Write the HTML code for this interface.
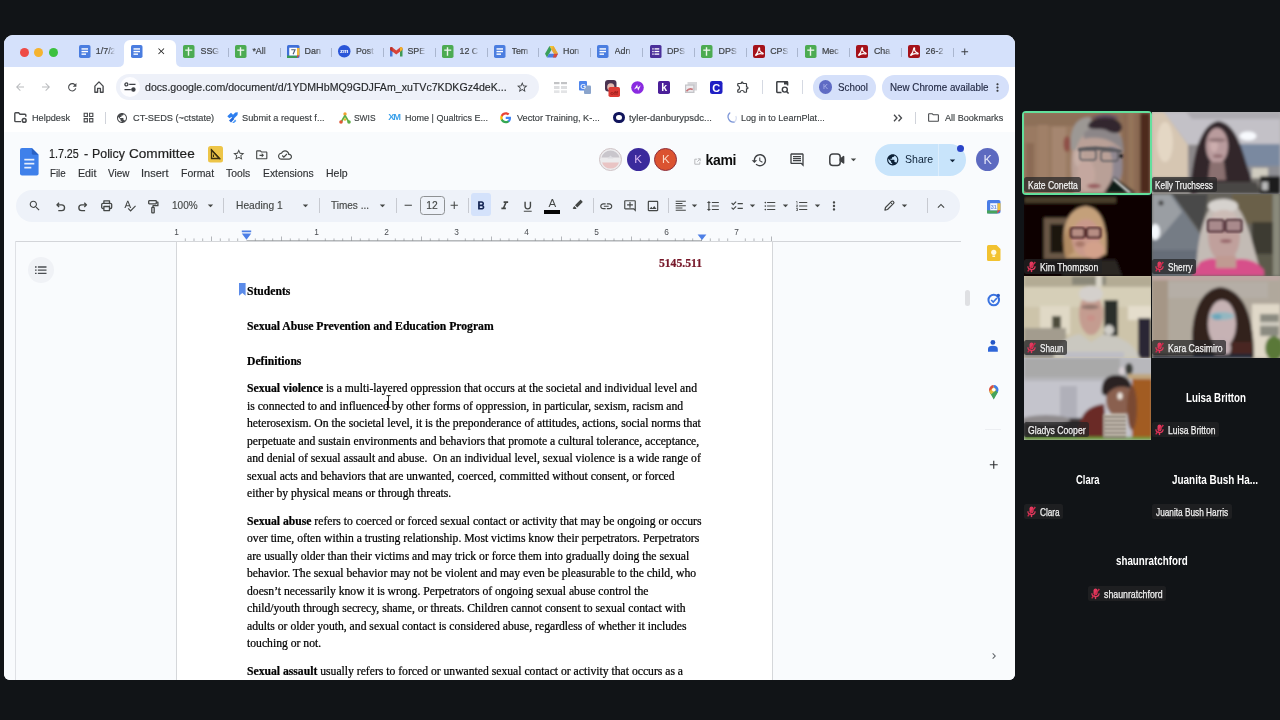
<!DOCTYPE html>
<html lang="en">
<head>
<meta charset="utf-8">
<title>1.7.25 - Policy Committee - Google Docs</title>
<style>

*{box-sizing:border-box;margin:0;padding:0}
html,body{width:1280px;height:720px;overflow:hidden;background:#111417}
body{position:relative;font-family:"Liberation Sans",sans-serif;color:#1f1f1f}
.a{position:absolute}
.t{position:absolute;white-space:nowrap;line-height:1}
svg{position:absolute;overflow:visible}
#win{position:absolute;left:4px;top:35px;width:1011px;height:645px;border-radius:9px 9px 6px 6px;overflow:hidden;background:#fff}
#win>*{position:absolute}
/* everything inside #win is positioned in page coordinates via this shift wrapper */
.pg{position:absolute;left:-4px;top:-35px;width:1280px;height:720px}
#tabstrip{left:0;top:35px;width:1280px;height:32px;background:#d5e1fb}
#toolbar{left:0;top:67px;width:1280px;height:37px;background:#fff}
#bookmarks{left:0;top:104px;width:1280px;height:28px;background:#fff}
#docs{left:0;top:132px;width:1280px;height:560px;background:#f9fbfd}
.tab{font-size:8.9px;color:#3f4246;-webkit-text-stroke:.2px #3f4246;top:47.3px;width:19px;overflow:hidden;-webkit-mask-image:linear-gradient(90deg,#000 60%,transparent 100%);mask-image:linear-gradient(90deg,#000 60%,transparent 100%)}
.url{font-size:10.5px;color:#26282b;-webkit-text-stroke:.15px #26282b}
.chip{font-size:10.5px;color:#232a45;-webkit-text-stroke:.15px #232a45}
.bm{font-size:9px;color:#3c4043;top:113.8px;-webkit-text-stroke:.15px #3c4043}
.menu{font-size:10.7px;color:#2f3134;top:167.6px;-webkit-text-stroke:.15px #2f3134}
.title{font-size:13.4px;color:#1f1f1f;-webkit-text-stroke:.2px #1f1f1f}
.av{width:23px;height:23px;border-radius:50%}
.avt{width:23px;text-align:center;font-size:11.5px}
.kami{font-size:14px;font-weight:bold;color:#0c0c0c;letter-spacing:-.3px}
.share{font-size:11.2px;color:#0d2137}
.tb{font-size:10.3px;color:#444746;top:200.6px;-webkit-text-stroke:.15px #444746}
.doc{font-family:"Liberation Serif",serif;font-size:11.67px;color:#000;-webkit-text-stroke:.22px #000;line-height:17.5px;white-space:nowrap;position:absolute;left:247px}
.doc b{font-weight:bold}
.sep{position:absolute;width:1px;background:#c7cad1}

#zoom{position:absolute;left:0;top:0;width:1280px;height:720px}
.vt{position:absolute}
.mic{position:absolute}
.zl{position:absolute;background:rgba(36,36,38,.72);border-radius:2.5px}
.zt{font-size:10.6px;color:#f2f2f2;-webkit-text-stroke:.25px #f2f2f2;transform-origin:0 50%}
.zn{font-size:12px;font-weight:bold;color:#fff;transform-origin:0 50%}

#win .pg,#zoom{filter:blur(.45px)}

</style>
</head>
<body>
<div id="win">
<div class="pg">
<div class="a" id="tabstrip"></div>
<div class="a" style="left:124px;top:40px;width:52px;height:27px;background:#fff;border-radius:6px 6px 0 0"></div>
<svg style="left:118px;top:61px" width="64" height="6" viewBox="0 0 64 6"><path d="M0 6Q6 6 6 0V6ZM64 6Q58 6 58 0V6Z" fill="#fff"/></svg>
<div class="a" style="left:19.5px;top:47.5px;width:9px;height:9px;border-radius:50%;background:#ee4b46"></div>
<div class="a" style="left:34.0px;top:47.5px;width:9px;height:9px;border-radius:50%;background:#f5b32f"></div>
<div class="a" style="left:48.5px;top:47.5px;width:9px;height:9px;border-radius:50%;background:#3cc13f"></div>
<svg style="left:78.50px;top:45.00px" width="11.5" height="13" viewBox="0 0 23 26"><rect x="0" y="0" width="23" height="26" rx="3.5" fill="#4a7de0"/><rect x="5" y="6.5" width="13" height="2.8" fill="#fff"/><rect x="5" y="11.7" width="13" height="2.8" fill="#fff"/><rect x="5" y="16.9" width="9" height="2.8" fill="#fff"/></svg>
<div class="t tab" style="left:95.8px">1/7/2</div>
<svg style="left:131.00px;top:45.00px" width="11.5" height="13" viewBox="0 0 23 26"><rect x="0" y="0" width="23" height="26" rx="3.5" fill="#4a7de0"/><rect x="5" y="6.5" width="13" height="2.8" fill="#fff"/><rect x="5" y="11.7" width="13" height="2.8" fill="#fff"/><rect x="5" y="16.9" width="9" height="2.8" fill="#fff"/></svg>
<svg style="left:183.25px;top:45.00px" width="11.5" height="13" viewBox="0 0 23 26"><rect x="0" y="0" width="23" height="26" rx="3.5" fill="#4cab52"/><rect x="4.5" y="9" width="14" height="2.6" fill="#eaf6ea"/><rect x="9.6" y="4.5" width="2.8" height="17" fill="#eaf6ea"/></svg>
<div class="t tab" style="left:200.5px">SSG</div>
<svg style="left:235.15px;top:45.00px" width="11.5" height="13" viewBox="0 0 23 26"><rect x="0" y="0" width="23" height="26" rx="3.5" fill="#4cab52"/><rect x="4.5" y="9" width="14" height="2.6" fill="#eaf6ea"/><rect x="9.6" y="4.5" width="2.8" height="17" fill="#eaf6ea"/></svg>
<div class="t tab" style="left:252.4px">*All</div>
<div class="sep" style="left:227.6px;top:47.5px;height:9px;background:#aab6cf"></div>
<svg style="left:286.85px;top:45.00px" width="12.5" height="13" viewBox="0 0 25 26"><rect x="0" y="0" width="25" height="26" rx="3" fill="#3f6fd8"/><rect x="20" y="6" width="5" height="15" fill="#f2b93b"/><rect x="0" y="21" width="20" height="5" fill="#3c9a55"/><path d="M20 21h5l-5 5z" fill="#d9483b"/><rect x="4.5" y="5.5" width="15.5" height="15.500" fill="#fff"/><path d="M8.500 9.500h7.500l-3.800 9" fill="none" stroke="#50607a" stroke-width="2.300"/></svg>
<div class="t tab" style="left:304.6px">Dan</div>
<div class="sep" style="left:279.8px;top:47.5px;height:9px;background:#aab6cf"></div>
<svg style="left:338.15px;top:45.25px" width="12.5" height="12.5" viewBox="0 0 25 25"><circle cx="12.500" cy="12.500" r="12.500" fill="#2a55d8"/><text x="12.500" y="16.400" font-family="Liberation Sans,sans-serif" font-weight="bold" font-size="11.500" fill="#fff" text-anchor="middle" textLength="17" lengthAdjust="spacingAndGlyphs">zm</text></svg>
<div class="t tab" style="left:355.9px">Post</div>
<div class="sep" style="left:331.1px;top:47.5px;height:9px;background:#aab6cf"></div>
<svg style="left:389.65px;top:46.75px" width="12.5" height="9.5" viewBox="0 0 25 19"><path d="M0 3v16h5V8.500z" fill="#4a78d8"/><path d="M25 3v16h-5V8.500z" fill="#3f9a57"/><path d="M0 3C0 0 3 -1 5 1l7.500 6L20 1c2-2 5-1 5 2v2.500L12.500 15 0 5.500z" fill="#d8433a"/><path d="M20 1c2-2 5-1 5 2v2.500l-5 3.800z" fill="#f0b429"/><path d="M5 1C3 -1 0 0 0 3v2.500l5 3.800z" fill="#b8322c"/></svg>
<div class="t tab" style="left:407.4px">SPE</div>
<div class="sep" style="left:382.6px;top:47.5px;height:9px;background:#aab6cf"></div>
<svg style="left:442.25px;top:45.00px" width="11.5" height="13" viewBox="0 0 23 26"><rect x="0" y="0" width="23" height="26" rx="3.5" fill="#4cab52"/><rect x="4.5" y="9" width="14" height="2.6" fill="#eaf6ea"/><rect x="9.6" y="4.5" width="2.8" height="17" fill="#eaf6ea"/></svg>
<div class="t tab" style="left:459.5px">12 C</div>
<div class="sep" style="left:434.7px;top:47.5px;height:9px;background:#aab6cf"></div>
<svg style="left:494.25px;top:45.00px" width="11.5" height="13" viewBox="0 0 23 26"><rect x="0" y="0" width="23" height="26" rx="3.5" fill="#4a7de0"/><rect x="5" y="6.5" width="13" height="2.8" fill="#fff"/><rect x="5" y="11.7" width="13" height="2.8" fill="#fff"/><rect x="5" y="16.9" width="9" height="2.8" fill="#fff"/></svg>
<div class="t tab" style="left:511.5px">Tem</div>
<div class="sep" style="left:486.7px;top:47.5px;height:9px;background:#aab6cf"></div>
<svg style="left:545.00px;top:45.75px" width="13" height="11.5" viewBox="0 0 26 23"><path d="M9 0h8l9 15.500h-8z" fill="#f2c230"/><path d="M9 0L0 15.500 4 23l9-15.500z" fill="#3a9f5a"/><path d="M4 23l4-7.500h18L22 23z" fill="#4a7de0"/><path d="M17 0l9 15.500h-8l-5-8z" fill="#e8a838"/><path d="M18 15.500h8L22 23h-6z" fill="#d94a3c"/></svg>
<div class="t tab" style="left:563.0px">Hon</div>
<div class="sep" style="left:538.2px;top:47.5px;height:9px;background:#aab6cf"></div>
<svg style="left:597.35px;top:45.00px" width="11.5" height="13" viewBox="0 0 23 26"><rect x="0" y="0" width="23" height="26" rx="3.5" fill="#4a7de0"/><rect x="5" y="6.5" width="13" height="2.8" fill="#fff"/><rect x="5" y="11.7" width="13" height="2.8" fill="#fff"/><rect x="5" y="16.9" width="9" height="2.8" fill="#fff"/></svg>
<div class="t tab" style="left:614.6px">Adn</div>
<div class="sep" style="left:589.8px;top:47.5px;height:9px;background:#aab6cf"></div>
<svg style="left:649.65px;top:45.00px" width="11.5" height="13" viewBox="0 0 23 26"><rect x="0" y="0" width="23" height="26" rx="3" fill="#4a2f9a"/><rect x="9" y="6.5" width="9.5" height="2.6" fill="#fff"/><rect x="9" y="11.7" width="9.5" height="2.6" fill="#fff"/><rect x="9" y="16.9" width="9.500" height="2.6" fill="#fff"/><rect x="4.5" y="6.5" width="2.8" height="2.6" fill="#fff"/><rect x="4.5" y="11.7" width="2.8" height="2.6" fill="#fff"/><rect x="4.5" y="16.9" width="2.8" height="2.6" fill="#fff"/></svg>
<div class="t tab" style="left:666.9px">DPS</div>
<div class="sep" style="left:642.1px;top:47.5px;height:9px;background:#aab6cf"></div>
<svg style="left:701.35px;top:45.00px" width="11.5" height="13" viewBox="0 0 23 26"><rect x="0" y="0" width="23" height="26" rx="3.5" fill="#4cab52"/><rect x="4.5" y="9" width="14" height="2.6" fill="#eaf6ea"/><rect x="9.6" y="4.5" width="2.8" height="17" fill="#eaf6ea"/></svg>
<div class="t tab" style="left:718.6px">DPS</div>
<div class="sep" style="left:693.8px;top:47.5px;height:9px;background:#aab6cf"></div>
<svg style="left:752.75px;top:45.00px" width="12" height="13" viewBox="0 0 24 26"><rect x="0" y="0" width="24" height="26" rx="4" fill="#a5121a"/><path d="M5 20.500C8 18 10.500 13 11.500 6.500 12 4.800 13.600 5.200 13.300 7 12.600 11 14.500 14.500 19.500 16.200 21 16.800 20.300 18.300 18.800 17.900 14 16.500 9 17.500 6 20.800" fill="none" stroke="#fff" stroke-width="2.200" stroke-linecap="round" stroke-linejoin="round"/></svg>
<div class="t tab" style="left:770.2px">CPS</div>
<div class="sep" style="left:745.5px;top:47.5px;height:9px;background:#aab6cf"></div>
<svg style="left:804.65px;top:45.00px" width="11.5" height="13" viewBox="0 0 23 26"><rect x="0" y="0" width="23" height="26" rx="3.5" fill="#4cab52"/><rect x="4.5" y="9" width="14" height="2.6" fill="#eaf6ea"/><rect x="9.6" y="4.5" width="2.8" height="17" fill="#eaf6ea"/></svg>
<div class="t tab" style="left:821.9px">Mec</div>
<div class="sep" style="left:797.1px;top:47.5px;height:9px;background:#aab6cf"></div>
<svg style="left:856.40px;top:45.00px" width="12" height="13" viewBox="0 0 24 26"><rect x="0" y="0" width="24" height="26" rx="4" fill="#a5121a"/><path d="M5 20.500C8 18 10.500 13 11.500 6.500 12 4.800 13.600 5.200 13.300 7 12.600 11 14.500 14.500 19.500 16.200 21 16.800 20.300 18.300 18.800 17.900 14 16.500 9 17.500 6 20.800" fill="none" stroke="#fff" stroke-width="2.200" stroke-linecap="round" stroke-linejoin="round"/></svg>
<div class="t tab" style="left:873.9px">Cha</div>
<div class="sep" style="left:849.1px;top:47.5px;height:9px;background:#aab6cf"></div>
<svg style="left:908.10px;top:45.00px" width="12" height="13" viewBox="0 0 24 26"><rect x="0" y="0" width="24" height="26" rx="4" fill="#a5121a"/><path d="M5 20.500C8 18 10.500 13 11.500 6.500 12 4.800 13.600 5.200 13.300 7 12.600 11 14.500 14.500 19.500 16.200 21 16.800 20.300 18.300 18.800 17.900 14 16.500 9 17.500 6 20.800" fill="none" stroke="#fff" stroke-width="2.200" stroke-linecap="round" stroke-linejoin="round"/></svg>
<div class="t tab" style="left:925.6px">26-2</div>
<div class="sep" style="left:900.8px;top:47.5px;height:9px;background:#aab6cf"></div>
<div class="sep" style="left:952.8px;top:47.5px;height:9px;background:#aab6cf"></div>
<svg style="left:156.05px;top:46.35px" width="10.5" height="10.5" viewBox="0 0 24 24" ><path d="M19 6.41L17.59 5 12 10.59 6.41 5 5 6.41 10.59 12 5 17.59 6.41 19 12 13.41 17.59 19 19 17.59 13.41 12z" fill="#1f1f1f"/></svg>
<svg style="left:958.55px;top:45.85px" width="11.5" height="11.5" viewBox="0 0 24 24" ><path d="M19 13h-6v6h-2v-6H5v-2h6V5h2v6h6v2z" fill="#3a3d42"/></svg>
<div class="a" id="toolbar"></div>
<svg style="left:14.00px;top:81.30px" width="12" height="12" viewBox="0 0 24 24" ><path d="M20 11H7.83l5.59-5.59L12 4l-8 8 8 8 1.41-1.41L7.83 13H20v-2z" fill="#b9bbbe"/></svg>
<svg style="left:40.00px;top:81.30px" width="12" height="12" viewBox="0 0 24 24" ><path d="M12 4l-1.41 1.41L16.17 11H4v2h12.17l-5.58 5.59L12 20l8-8z" fill="#b9bbbe"/></svg>
<svg style="left:66.15px;top:81.05px" width="12.5" height="12.5" viewBox="0 0 24 24" ><path d="M17.65 6.35C16.2 4.9 14.21 4 12 4c-4.42 0-7.99 3.58-7.99 8s3.57 8 7.99 8c3.73 0 6.84-2.55 7.73-6h-2.08c-.82 2.33-3.04 4-5.65 4-3.31 0-6-2.69-6-6s2.69-6 6-6c1.66 0 3.14.69 4.22 1.78L13 11h7V4l-2.35 2.35z" fill="#47494c"/></svg>
<svg style="left:93.70px;top:81.40px" width="10" height="12" viewBox="0 0 10 12" fill="none" stroke="#47494c" stroke-width="1.35" stroke-linejoin="round"><path d="M0.900 5.100L5 0.900 9.100 5.100V11.200H6.400V7.400H3.600V11.200H0.900Z"/></svg>
<div class="a" style="left:116px;top:74px;width:423px;height:26px;border-radius:13px;background:#eef1f9"></div>
<div class="a" style="left:120px;top:77px;width:20px;height:20px;border-radius:10px;background:#fdfdff"></div>
<svg style="left:124.20px;top:82.00px" width="12" height="10" viewBox="0 0 12 10" fill="none" stroke="#3c3f43" stroke-width="1.3" stroke-linejoin="round"><circle cx="2.400" cy="2.400" r="1.500"/><path d="M5.200 2.400H11.500M0.500 7.600H6.800"/><circle cx="9.400" cy="7.600" r="1.600" fill="#3c3f43"/></svg>
<div class="t url" style="left:144.6px;font-size:10.4px;transform:scaleX(1.0216);transform-origin:0 50%;top:82.5px;">docs.google.com/document/d/1YDMHbMQ9GDJFAm_xuTVc7KDKGz4deK...</div>
<svg style="left:515.75px;top:80.75px" width="12.5" height="12.5" viewBox="0 0 24 24" ><path d="M22 9.24l-7.19-.62L12 2 9.19 8.63 2 9.24l5.46 4.73L5.82 21 12 17.27 18.18 21l-1.63-7.03L22 9.24zM12 15.4l-3.76 2.27 1-4.28-3.32-2.88 4.38-.38L12 6.1l1.71 4.04 4.38.38-3.32 2.88 1 4.28L12 15.4z" fill="#3c3f43"/></svg>
<svg style="left:553.50px;top:81.80px" width="13" height="11" viewBox="0 0 13 11"><rect x="0" y="0" width="5.500" height="2.200" fill="#c2c3c5"/><rect x="7" y="0" width="6" height="2.200" fill="#c2c3c5"/><rect x="0" y="4" width="5.500" height="3" fill="#dcdddf"/><rect x="7" y="4" width="6" height="3" fill="#dcdddf"/><rect x="0" y="8.300" width="5.500" height="2.700" fill="#e3e4e6"/><rect x="7" y="8.300" width="6" height="2.700" fill="#e3e4e6"/></svg>
<svg style="left:578.80px;top:80.50px" width="12" height="13" viewBox="0 0 12 13"><rect x="0" y="0" width="8" height="9.500" rx="1" fill="#4f86ec"/><rect x="5" y="4.500" width="7" height="8.500" rx="1" fill="#8aa4cc"/><text x="1.200" y="7.800" font-family="Liberation Sans,sans-serif" font-weight="bold" font-size="7.500" fill="#e8f0ff">G</text></svg>
<svg style="left:604.80px;top:79.50px" width="15" height="17" viewBox="0 0 15 17"><rect x="0" y="0" width="11.500" height="11.500" rx="3" fill="#4a3350"/><ellipse cx="5.800" cy="7" rx="3.600" ry="3.800" fill="#e2b9b0"/><rect x="3.500" y="7" width="11.500" height="10" rx="1.800" fill="#dc3a34"/><text x="9.200" y="14.600" font-family="Liberation Sans,sans-serif" font-weight="bold" font-size="6" fill="#8e1a18" text-anchor="middle">off</text></svg>
<svg style="left:631.30px;top:80.50px" width="13" height="13" viewBox="0 0 13 13"><circle cx="6.500" cy="6.500" r="6.300" fill="#8a2be0"/><path d="M3 8.500L6.200 3.500 6.800 6.800 9.800 4.300 7.200 9.800 6.300 6.800Z" fill="#fff"/></svg>
<svg style="left:658.00px;top:80.50px" width="12" height="13" viewBox="0 0 12 13"><rect x="0" y="0" width="12" height="13" rx="1.800" fill="#4b1f99"/><text x="6.200" y="10.300" font-family="Liberation Sans,sans-serif" font-weight="bold" font-size="10.500" fill="#fff" text-anchor="middle">k</text></svg>
<svg style="left:684.60px;top:81.80px" width="12" height="11" viewBox="0 0 12 11"><rect x="2.500" y="0" width="9.500" height="8.500" fill="#d7d7da"/><rect x="0" y="2.500" width="9.500" height="8.500" fill="#c4c4c8"/><rect x="1.200" y="3.700" width="7" height="6" fill="#ededf0"/><path d="M1.500 9.300Q4 5.500 7.800 7.500" fill="none" stroke="#c8767a" stroke-width="1.600"/></svg>
<svg style="left:710.05px;top:80.50px" width="12.5" height="13" viewBox="0 0 12.5 13"><rect x="0" y="0" width="12.500" height="13" rx="2.200" fill="#1f1fc4"/><text x="6.300" y="10.600" font-family="Liberation Sans,sans-serif" font-weight="bold" font-size="11" fill="#fff" text-anchor="middle">C</text></svg>
<svg style="left:736.00px;top:79.80px" width="14" height="14" viewBox="0 0 24 24" ><path d="M10.500 4.500c.28 0 .5.22.5.5v2h6v6h2c.28 0 .5.22.5.5s-.22.5-.5.5h-2v6h-2.120c-.68-1.750-2.390-3-4.380-3s-3.700 1.250-4.380 3H4v-2.120c1.750-.68 3-2.390 3-4.380 0-1.990-1.240-3.700-2.990-4.380L4 7h6V5c0-.28.22-.5.5-.5m0-2C9.120 2.500 8 3.620 8 5H4c-1.100 0-1.990.9-1.990 2v3.800h.29c1.490 0 2.700 1.210 2.700 2.700s-1.210 2.700-2.700 2.700H2V20c0 1.100.9 2 2 2h3.800v-.3c0-1.490 1.210-2.700 2.700-2.700s2.700 1.210 2.700 2.700v.3H17c1.100 0 2-.9 2-2v-4c1.380 0 2.500-1.120 2.500-2.500S20.380 11 19 11V7c0-1.100-.9-2-2-2h-4c0-1.380-1.120-2.500-2.500-2.500z" fill="#3c3f43"/></svg>
<div class="sep" style="left:761.5px;top:80px;height:14px;background:#d5d9e2"></div>
<svg style="left:775.50px;top:80.80px" width="13" height="13" viewBox="0 0 13 13"><path d="M5.500 11.400H1.400Q0.800 11.400 0.800 10.800V1.400Q0.800 0.800 1.400 0.800H11Q11.600 0.800 11.600 1.400V4.500" fill="none" stroke="#3c3f43" stroke-width="1.500"/><rect x="8" y="0.500" width="4" height="3" fill="#3c3f43"/><circle cx="8.800" cy="8.600" r="2.500" fill="none" stroke="#3c3f43" stroke-width="1.400"/><path d="M10.600 10.500L12.600 12.600" stroke="#3c3f43" stroke-width="1.500"/></svg>
<div class="sep" style="left:801.500px;top:80px;height:14px;background:#d5d9e2"></div>
<div class="a" style="left:813px;top:75px;width:63px;height:24.500px;border-radius:12.300px;background:#d5e0fa"></div>
<div class="a" style="left:818.500px;top:80.200px;width:13.800px;height:13.800px;border-radius:50%;background:#5f6bc4"></div>
<div class="t" style="left:818.500px;top:83.300px;width:13.800px;text-align:center;font-size:7.500px;color:#aeb6ea">K</div>
<div class="t chip" style="left:837.8px;font-size:10.3px;transform:scaleX(0.9525);transform-origin:0 50%;top:82.8px;">School</div>
<div class="a" style="left:882px;top:75px;width:127px;height:24.500px;border-radius:12.300px;background:#d5e0fa"></div>
<div class="t chip" style="left:889.7px;font-size:10.3px;transform:scaleX(0.9515);transform-origin:0 50%;top:82.8px;">New Chrome available</div>
<svg style="left:991.00px;top:80.50px" width="13" height="13" viewBox="0 0 24 24" ><path d="M12 8c1.1 0 2-.9 2-2s-.9-2-2-2-2 .9-2 2 .9 2 2 2zm0 2c-1.1 0-2 .9-2 2s.9 2 2 2 2-.9 2-2-.9-2-2-2zm0 6c-1.1 0-2 .9-2 2s.9 2 2 2 2-.9 2-2-.9-2-2-2z" fill="#3c3f43"/></svg>
<div class="a" id="bookmarks"></div>
<svg style="left:13.50px;top:112.30px" width="13" height="11" viewBox="0 0 13 11"><path d="M7 9.600H1.600Q0.800 9.600 0.800 8.800V1.600Q0.800 0.800 1.600 0.800H4.600L6 2.300H11Q11.800 2.300 11.800 3.100V4.800" fill="none" stroke="#47494c" stroke-width="1.400"/><circle cx="10.200" cy="8.400" r="1.900" fill="none" stroke="#47494c" stroke-width="1.500"/></svg>
<svg style="left:82.10px;top:111.20px" width="13" height="13" viewBox="0 0 24 24" ><path d="M3 3v8h8V3H3zm6 6H5V5h4v4zm-6 4v8h8v-8H3zm6 6H5v-4h4v4zm4-16v8h8V3h-8zm6 6h-4V5h4v4zm-6 4v8h8v-8h-8zm6 6h-4v-4h4v4z" fill="#47494c"/></svg>
<div class="sep" style="left:105px;top:112px;height:12px;background:#d0d3da"></div>
<svg style="left:116.00px;top:111.70px" width="12" height="12" viewBox="0 0 24 24" ><path d="M12 2C6.480 2 2 6.480 2 12s4.480 10 10 10 10-4.480 10-10S17.520 2 12 2zm-1 17.930c-3.950-.49-7-3.850-7-7.930 0-.62.08-1.210.21-1.790L9 15v1c0 1.100.9 2 2 2v1.930zm6.900-2.540c-.26-.81-1-1.390-1.900-1.390h-1v-3c0-.55-.45-1-1-1H8v-2h2c.55 0 1-.45 1-1V7h2c1.100 0 2-.9 2-2v-.41c2.930 1.190 5 4.060 5 7.410 0 2.080-.8 3.970-2.100 5.390z" fill="#47494c"/></svg>
<svg style="left:227.00px;top:112.20px" width="11" height="11" viewBox="0 0 11 11"><path d="M0.300 4.200L4 0.800 6 2.800 8.300 0.500 10.800 0.300 10.500 3 6.500 7 4.500 5 2.300 6.200Z" fill="#2d7ff0"/><path d="M2 8.500L5.500 5.200 7.300 7 4 10.500Z" fill="#2468d8"/><path d="M5.200 11L8.200 7.500 9.300 9 7 11Z" fill="#4b9af8"/></svg>
<svg style="left:339.30px;top:111.70px" width="12" height="12" viewBox="0 0 12 12"><circle cx="6" cy="2" r="1.700" fill="#f0a030"/><path d="M6 3.500L2.500 9.500" stroke="#5fae46" stroke-width="1.700"/><path d="M6 3.500L9.500 9.500" stroke="#5fae46" stroke-width="1.700"/><circle cx="2" cy="10" r="1.800" fill="#e05838"/><circle cx="10" cy="10" r="1.800" fill="#5fae46"/><circle cx="6" cy="7.500" r="1.300" fill="#e0c030"/></svg>
<div class="t" style="left:388.300px;top:113.300px;font-size:9.300px;font-weight:bold;color:#3aa0ea;letter-spacing:-1.300px">XM</div>
<svg style="left:500.25px;top:111.95px" width="11.5" height="11.5" viewBox="0 0 24 24"><path d="M23 12.300c0-.8-.1-1.600-.2-2.300H12v4.500h6.200c-.3 1.400-1.100 2.600-2.300 3.400v2.900h3.700c2.200-2 3.400-5 3.400-8.500z" fill="#4285f4"/><path d="M12 23.500c3.100 0 5.700-1 7.600-2.800l-3.700-2.900c-1 .7-2.400 1.100-3.900 1.100-3 0-5.500-2-6.400-4.700H1.800v3C3.700 21 7.500 23.500 12 23.500z" fill="#34a853"/><path d="M5.600 14.200c-.2-.7-.4-1.400-.4-2.200s.1-1.500.4-2.200v-3H1.800C1 8.400.5 10.100.5 12s.5 3.600 1.300 5.200l3.800-3z" fill="#fbbc05"/><path d="M12 5.100c1.700 0 3.200.6 4.400 1.700l3.300-3.300C17.700 1.600 15.100.5 12 .5 7.500.5 3.700 3 1.800 6.800l3.800 3C6.500 7.100 9 5.100 12 5.100z" fill="#ea4335"/></svg>
<div class="a" style="left:613px;top:111.900px;width:11.600px;height:11.600px;border-radius:50%;border:3.300px solid #11155c"></div>
<svg style="left:724.60px;top:111.70px" width="12" height="12" viewBox="0 0 12 12"><path d="M4.800 1A5.200 5.200 0 0 0 9.500 9.900" fill="none" stroke="#7f98d8" stroke-width="1.300" stroke-linecap="round"/><path d="M9.500 9.900A5.200 5.200 0 0 0 10.800 4" fill="none" stroke="#d5dcf0" stroke-width="1.200"/></svg>
<svg style="left:892.50px;top:113.70px" width="10" height="8" viewBox="0 0 10 8"><path d="M1 0.800L4 4 1 7.200M5.500 0.800L8.500 4 5.500 7.200" fill="none" stroke="#47494c" stroke-width="1.300"/></svg>
<div class="sep" style="left:915px;top:112px;height:12px;background:#d0d3da"></div>
<svg style="left:927.00px;top:111.20px" width="13" height="13" viewBox="0 0 24 24" ><path d="M9.170 6l2 2H20v10H4V6h5.170M10 4H4c-1.100 0-1.990.9-1.990 2L2 18c0 1.100.9 2 2 2h16c1.100 0 2-.9 2-2V8c0-1.100-.9-2-2-2h-8l-2-2z" fill="#47494c"/></svg>
<div class="t bm" style="left:32.2px;font-size:9px;transform:scaleX(1.0128);transform-origin:0 50%;">Helpdesk</div>
<div class="t bm" style="left:132.6px;font-size:9px;transform:scaleX(1.0243);transform-origin:0 50%;">CT-SEDS (~ctstate)</div>
<div class="t bm" style="left:242px;font-size:9px;transform:scaleX(1.0256);transform-origin:0 50%;">Submit a request f...</div>
<div class="t bm" style="left:354.1px;font-size:9px;transform:scaleX(0.9347);transform-origin:0 50%;">SWIS</div>
<div class="t bm" style="left:404.6px;font-size:9px;transform:scaleX(1.0017);transform-origin:0 50%;">Home | Qualtrics E...</div>
<div class="t bm" style="left:516.8px;font-size:9px;transform:scaleX(1.0167);transform-origin:0 50%;">Vector Training, K-...</div>
<div class="t bm" style="left:629.1px;font-size:9px;transform:scaleX(1.0489);transform-origin:0 50%;">tyler-danburypsdc...</div>
<div class="t bm" style="left:741.3px;font-size:9px;transform:scaleX(1.0077);transform-origin:0 50%;">Log in to LearnPlat...</div>
<div class="t bm" style="left:945px;font-size:9px;transform:scaleX(1.0119);transform-origin:0 50%;">All Bookmarks</div>
</div>
<div class="pg">
<div class="a" id="docs"></div>
<svg style="left:19.50px;top:148.40px" width="18.6" height="27.6" viewBox="0 0 18.6 27.6"><path d="M2 0H11.800L18.600 6.800V25.600Q18.600 27.600 16.600 27.600H2Q0 27.600 0 25.600V2Q0 0 2 0Z" fill="#3f80ea"/><path d="M11.800 0L18.600 6.800H13.300Q11.800 6.800 11.800 5.300Z" fill="#2b62c4"/><rect x="4.300" y="10.800" width="10" height="1.700" fill="#e6eefc"/><rect x="4.300" y="14.800" width="10" height="1.700" fill="#e6eefc"/><rect x="4.300" y="18.800" width="7" height="1.700" fill="#e6eefc"/></svg>
<div class="t title" style="left:49.2px;font-size:13.3px;transform:scaleX(0.8059);transform-origin:0 50%;top:147.3px;">1.7.25</div>
<div class="t title" style="left:83.5px;font-size:13.3px;transform:scaleX(0.9482);transform-origin:0 50%;top:147.3px;">-</div>
<div class="t title" style="left:91.6px;font-size:13.3px;transform:scaleX(0.9301);transform-origin:0 50%;top:147.3px;">Policy</div>
<div class="t title" style="left:129px;font-size:13.3px;transform:scaleX(1.0218);transform-origin:0 50%;top:147.3px;">Committee</div>
<svg style="left:208.40px;top:146.15px" width="15" height="16.5" viewBox="0 0 15 16.5"><rect width="15" height="16.500" rx="2.500" fill="#edc548"/><path d="M3.500 12.500V4L11.500 12.500Z" fill="none" stroke="#3b3110" stroke-width="1.300"/><path d="M3 3.500L12 13" stroke="#3b3110" stroke-width="1.300"/><path d="M5.500 11V8.500" stroke="#3b3110" stroke-width="1.100"/></svg>
<svg style="left:231.95px;top:147.75px" width="13.5" height="13.5" viewBox="0 0 24 24" ><path d="M22 9.24l-7.19-.62L12 2 9.19 8.63 2 9.24l5.46 4.73L5.82 21 12 17.27 18.18 21l-1.63-7.03L22 9.24zM12 15.4l-3.76 2.27 1-4.28-3.32-2.88 4.38-.38L12 6.1l1.71 4.04 4.38.38-3.32 2.88 1 4.28L12 15.4z" fill="#444746"/></svg>
<svg style="left:255.35px;top:147.95px" width="13.5" height="13.5" viewBox="0 0 24 24" ><path d="M20 6h-8l-2-2H4c-1.100 0-2 .9-2 2v12c0 1.100.9 2 2 2h16c1.100 0 2-.9 2-2V8c0-1.100-.9-2-2-2zm0 12H4V6h5.170l2 2H20v10zm-8-1l4-4-4-4v3H8v2h4v3z" fill="#444746"/></svg>
<svg style="left:278.20px;top:147.90px" width="14" height="14" viewBox="0 0 24 24" ><path d="M19.350 10.040C18.670 6.590 15.640 4 12 4 9.110 4 6.600 5.640 5.350 8.040 2.340 8.360 0 10.910 0 14c0 3.310 2.690 6 6 6h13c2.760 0 5-2.240 5-5 0-2.640-2.050-4.780-4.650-4.960zM19 18H6c-2.210 0-4-1.790-4-4s1.790-4 4-4h.71C7.370 7.690 9.480 6 12 6c3.040 0 5.500 2.460 5.500 5.500v.5H19c1.660 0 3 1.340 3 3s-1.340 3-3 3zm-9-3.820l-2.090-2.090L6.500 13.500 10 17l6.010-6.010-1.410-1.410z" fill="#444746"/></svg>
<div class="t menu" style="left:49.6px;font-size:10.6px;transform:scaleX(0.9192);transform-origin:0 50%;">File</div>
<div class="t menu" style="left:77.5px;font-size:10.6px;transform:scaleX(1.0073);transform-origin:0 50%;">Edit</div>
<div class="t menu" style="left:107.7px;font-size:10.6px;transform:scaleX(0.9348);transform-origin:0 50%;">View</div>
<div class="t menu" style="left:141.3px;font-size:10.6px;transform:scaleX(1.0373);transform-origin:0 50%;">Insert</div>
<div class="t menu" style="left:180.9px;font-size:10.6px;transform:scaleX(0.9860);transform-origin:0 50%;">Format</div>
<div class="t menu" style="left:226.3px;font-size:10.6px;transform:scaleX(0.9779);transform-origin:0 50%;">Tools</div>
<div class="t menu" style="left:262.8px;font-size:10.6px;transform:scaleX(0.9759);transform-origin:0 50%;">Extensions</div>
<div class="t menu" style="left:325.5px;font-size:10.6px;transform:scaleX(0.9908);transform-origin:0 50%;">Help</div>
<svg style="left:598.80px;top:148.30px" width="23" height="23" viewBox="0 0 23 23"><circle cx="11.500" cy="11.500" r="11" fill="#ecebed" stroke="#cfc3c6" stroke-width="1"/><path d="M2.500 9.500A9.300 9.300 0 0 1 20.500 9.500Z" fill="#c9c6cc"/><path d="M3 14.500H20A9 9 0 0 1 3 14.500Z" fill="#e9c4c4"/><path d="M8.500 10.500L11.500 7.500 14.500 10.500Z" fill="#dedde2"/></svg>
<div class="a av" style="left:626.500px;top:148.300px;background:#3b2a9c"></div><div class="t avt" style="left:626.500px;top:154.400px;color:#d9b6f2">K</div>
<div class="a av" style="left:654.400px;top:148.300px;background:#db5330;border:1.500px solid #8e2f3c"></div><div class="t avt" style="left:654.400px;top:154.400px;color:#fbd9c4">K</div>
<svg style="left:694.20px;top:158.10px" width="7" height="7" viewBox="0 0 7 7"><path d="M3 1.200H0.800V6.200H5.800V4" fill="none" stroke="#b9babd" stroke-width="1"/><path d="M3.800 0.800H6.200V3.200M6.200 0.800L3.300 3.700" fill="none" stroke="#b9babd" stroke-width="1"/></svg>
<div class="t kami" style="left:705.500px;top:152.800px">kami</div>
<svg style="left:751.35px;top:151.55px" width="16.5" height="16.5" viewBox="0 0 24 24" ><path d="M13 3c-4.970 0-9 4.030-9 9H1l3.890 3.890.07.14L9 12H6c0-3.870 3.130-7 7-7s7 3.130 7 7-3.130 7-7 7c-1.930 0-3.680-.79-4.940-2.060l-1.420 1.420C8.270 19.990 10.510 21 13 21c4.970 0 9-4.030 9-9s-4.030-9-9-9zm-1 5v5l4.280 2.540.72-1.210-3.500-2.080V8H12z" fill="#3f4144"/></svg>
<svg style="left:788.70px;top:152.30px" width="16" height="16" viewBox="0 0 24 24" ><path d="M21.990 4c0-1.100-.89-2-1.990-2H4c-1.100 0-2 .9-2 2v12c0 1.100.9 2 2 2h14l4 4-.01-18zM20 4v13.170L18.830 16H4V4h16zM6 12h12v2H6zm0-3h12v2H6zm0-3h12v2H6z" fill="#3f4144"/></svg>
<svg style="left:828.55px;top:153.35px" width="15.5" height="13.5" viewBox="0 0 15.5 13.5" fill="none" stroke="#3f4144" stroke-width="1.5" stroke-linejoin="round"><rect x="0.800" y="0.900" width="10.400" height="11.700" rx="3"/><path d="M11.300 6.200L14.600 3.600V9.900L11.300 7.300Z" fill="#3f4144"/></svg>
<svg style="left:847.20px;top:153.20px" width="13" height="13" viewBox="0 0 24 24" ><path d="M7 10l5 5 5-5z" fill="#444746"/></svg>
<div class="a" style="left:874.500px;top:144px;width:91px;height:32px;border-radius:16px;background:#c8e4fb"></div>
<div class="a" style="left:938.300px;top:144px;width:1px;height:32px;background:#dcedfc"></div>
<svg style="left:885.95px;top:153.05px" width="13.5" height="13.5" viewBox="0 0 24 24" ><path d="M12 2C6.480 2 2 6.480 2 12s4.480 10 10 10 10-4.480 10-10S17.520 2 12 2zm-1 17.930c-3.950-.49-7-3.850-7-7.930 0-.62.08-1.210.21-1.790L9 15v1c0 1.100.9 2 2 2v1.930zm6.900-2.540c-.26-.81-1-1.390-1.900-1.390h-1v-3c0-.55-.45-1-1-1H8v-2h2c.55 0 1-.45 1-1V7h2c1.100 0 2-.9 2-2v-.41c2.930 1.190 5 4.060 5 7.410 0 2.080-.8 3.970-2.100 5.390z" fill="#0d2137"/></svg>
<div class="t share" style="left:905.3px;font-size:11px;transform:scaleX(0.9573);transform-origin:0 50%;top:154.3px;">Share</div>
<svg style="left:945.50px;top:153.70px" width="13" height="13" viewBox="0 0 24 24" ><path d="M7 10l5 5 5-5z" fill="#0d2137"/></svg>
<div class="a" style="left:956.800px;top:144.700px;width:7px;height:7px;border-radius:50%;background:#2a44c8"></div>
<div class="a av" style="left:976px;top:148.100px;width:23.400px;height:23.400px;background:#5d6ac0"></div><div class="t avt" style="left:976px;top:153.800px;width:23.400px;font-size:12.500px;color:#e4e6f8">K</div>
<div class="a" style="left:16px;top:189.500px;width:944px;height:32.500px;border-radius:16.200px;background:#eef2f9"></div>
<svg style="left:28.45px;top:198.85px" width="13.5" height="13.5" viewBox="0 0 24 24" ><path d="M15.5 14h-.79l-.28-.27C15.41 12.59 16 11.11 16 9.5 16 5.91 13.09 3 9.5 3S3 5.91 3 9.5 5.91 16 9.5 16c1.61 0 3.09-.59 4.23-1.57l.27.28v.79l5 4.99L20.49 19l-4.99-5zm-6 0C7.01 14 5 11.99 5 9.5S7.01 5 9.5 5 14 7.01 14 9.5 11.99 14 9.5 14z" fill="#444746"/></svg>
<svg style="left:55.60px;top:201.80px" width="9.4" height="9.4" viewBox="0 0 9.4 9.4" fill="none" stroke="#444746" stroke-width="1.35" stroke-linejoin="round"><path d="M3.100 0.700L0.900 2.900 3.100 5.100M1 2.900H5.700A2.850 2.850 0 0 1 5.700 8.600H2.300"/></svg>
<svg style="left:78.30px;top:201.80px" width="9.4" height="9.4" viewBox="0 0 9.4 9.4" fill="none" stroke="#444746" stroke-width="1.35" stroke-linejoin="round"><path d="M6.300 0.700L8.500 2.900 6.300 5.100M8.400 2.900H3.700A2.850 2.850 0 0 0 3.700 8.600H7.100"/></svg>
<svg style="left:101.10px;top:200.30px" width="11.4" height="11.4" viewBox="0 0 11.4 11.4" fill="none" stroke="#444746" stroke-width="1.3" stroke-linejoin="round"><path d="M2.900 3.300V0.800H8.500V3.300"/><rect x="0.700" y="3.300" width="10" height="5.200" rx="1.300"/><rect x="2.900" y="6.500" width="5.600" height="4.100" fill="#eef2f9"/><circle cx="8.700" cy="5" r="0.500" fill="#444746" stroke="none"/></svg>
<svg style="left:122.85px;top:198.85px" width="13.5" height="13.5" viewBox="0 0 24 24" ><path d="M12.450 16h2.090L9.430 3H7.570L2.460 16h2.090l1.120-3h5.640l1.140 3zm-6.020-5L8.500 5.480 10.570 11H6.430zm15.160.59l-8.090 8.090L9.830 16l-1.410 1.410 5.090 5.090L23 13l-1.410-1.410z" fill="#444746"/></svg>
<svg style="left:147.50px;top:200.00px" width="10.6" height="13.6" viewBox="0 0 10.6 13.6" fill="none" stroke="#444746" stroke-width="1.3" stroke-linejoin="round"><rect x="0.700" y="0.700" width="7.600" height="3.100" rx="0.500"/><path d="M8.300 2.200H9.900V5.700H5V7.400"/><rect x="3.800" y="7.400" width="2.400" height="5.500" rx="0.500"/></svg>
<div class="t tb" style="left:172.2px;font-size:10.3px;transform:scaleX(0.9718);transform-origin:0 50%;">100%</div>
<svg style="left:204.40px;top:198.80px" width="13" height="13" viewBox="0 0 24 24" ><path d="M7 10l5 5 5-5z" fill="#444746"/></svg>
<div class="sep" style="left:223.400px;top:198px;height:15px"></div>
<div class="t tb" style="left:235.5px;font-size:10.3px;transform:scaleX(0.9923);transform-origin:0 50%;">Heading 1</div>
<svg style="left:298.70px;top:198.60px" width="13" height="13" viewBox="0 0 24 24" ><path d="M7 10l5 5 5-5z" fill="#444746"/></svg>
<div class="sep" style="left:319px;top:198px;height:15px"></div>
<div class="t tb" style="left:331px;font-size:10.3px;transform:scaleX(0.9718);transform-origin:0 50%;">Times ...</div>
<svg style="left:375.60px;top:198.60px" width="13" height="13" viewBox="0 0 24 24" ><path d="M7 10l5 5 5-5z" fill="#444746"/></svg>
<div class="sep" style="left:396.300px;top:198px;height:15px"></div>
<svg style="left:402.15px;top:199.35px" width="12.5" height="12.5" viewBox="0 0 24 24" ><path d="M19 13H5v-2h14v2z" fill="#444746"/></svg>
<div class="a" style="left:419.500px;top:195.800px;width:25px;height:19.700px;border:1.100px solid #8e9194;border-radius:3.500px"></div>
<div class="t tb" style="left:419.500px;width:25px;text-align:center">12</div>
<svg style="left:448.35px;top:199.35px" width="12.5" height="12.5" viewBox="0 0 24 24" ><path d="M19 13h-6v6h-2v-6H5v-2h6V5h2v6h6v2z" fill="#444746"/></svg>
<div class="sep" style="left:467.600px;top:198px;height:15px"></div>
<div class="a" style="left:471px;top:193px;width:20px;height:23px;border-radius:3px;background:#d4e2fb"></div>
<svg style="left:474.30px;top:198.60px" width="14" height="14" viewBox="0 0 24 24" ><path d="M15.6 10.79c.97-.67 1.65-1.77 1.65-2.79 0-2.26-1.75-4-4-4H7v14h7.04c2.09 0 3.71-1.7 3.71-3.79 0-1.52-.86-2.82-2.15-3.42zM10 6.5h3c.83 0 1.5.67 1.5 1.5s-.67 1.5-1.5 1.5h-3v-3zm3.5 9H10v-3h3.5c.83 0 1.5.67 1.5 1.5s-.67 1.5-1.5 1.5z" fill="#142554"/></svg>
<svg style="left:497.85px;top:199.25px" width="13.5" height="13.5" viewBox="0 0 24 24" ><path d="M10 4v3h2.21l-3.42 8H6v3h8v-3h-2.21l3.42-8H18V4z" fill="#444746"/></svg>
<svg style="left:521.25px;top:199.55px" width="13.5" height="13.5" viewBox="0 0 24 24" ><path d="M12 17c3.31 0 6-2.69 6-6V3h-2.5v8c0 1.93-1.57 3.5-3.5 3.5S8.5 12.93 8.5 11V3H6v8c0 3.31 2.69 6 6 6zm-7 2v2h14v-2H5z" fill="#444746"/></svg>
<div class="t" style="left:544px;top:198.300px;width:16.500px;text-align:center;font-size:11.500px;color:#444746">A</div>
<div class="a" style="left:544px;top:210.400px;width:16.300px;height:3.200px;background:#050505"></div>
<svg style="left:570.75px;top:197.55px" width="13.5" height="13.5" viewBox="0 0 24 24" ><path d="M17.750 3.600l2.650 2.650c.4.4.4 1.020 0 1.410L11.200 16.900l-4.100-4.100 9.240-9.200c.39-.39 1.020-.39 1.410 0zM6 14l4 4-1.500 1.500H4.500L3 18l3-4z" fill="#444746"/></svg>
<div class="sep" style="left:592.600px;top:198px;height:15px"></div>
<svg style="left:599.25px;top:198.75px" width="14.5" height="14.5" viewBox="0 0 24 24" ><path d="M3.9 12c0-1.71 1.39-3.1 3.1-3.1h4V7H7c-2.76 0-5 2.24-5 5s2.24 5 5 5h4v-1.9H7c-1.71 0-3.1-1.39-3.1-3.1zM8 13h8v-2H8v2zm9-6h-4v1.9h4c1.71 0 3.1 1.39 3.1 3.1s-1.39 3.1-3.1 3.1h-4V17h4c2.76 0 5-2.24 5-5s-2.24-5-5-5z" fill="#444746"/></svg>
<svg style="left:622.60px;top:198.80px" width="14" height="14" viewBox="0 0 24 24" ><path d="M22 4c0-1.100-.9-2-2-2H4c-1.100 0-2 .9-2 2v12c0 1.100.9 2 2 2h14l4 4V4zm-2 13.170L18.830 16H4V4h16v13.170zM13 5h-2v4H7v2h4v4h2v-4h4V9h-4z" fill="#444746"/></svg>
<svg style="left:646.40px;top:199.00px" width="14" height="14" viewBox="0 0 24 24" ><path d="M19 5v14H5V5h14m0-2H5c-1.100 0-2 .9-2 2v14c0 1.100.9 2 2 2h14c1.100 0 2-.9 2-2V5c0-1.100-.9-2-2-2zm-4.860 8.860l-3 3.870L9 13.140 6 17h12l-3.860-5.140z" fill="#444746"/></svg>
<div class="sep" style="left:668.300px;top:198px;height:15px"></div>
<svg style="left:674.45px;top:199.25px" width="13.5" height="13.5" viewBox="0 0 24 24" ><path d="M15 15H3v2h12v-2zm0-8H3v2h12V7zM3 13h18v-2H3v2zm0 8h18v-2H3v2zM3 3v2h18V3H3z" fill="#444746"/></svg>
<svg style="left:688.10px;top:199.20px" width="13" height="13" viewBox="0 0 24 24" ><path d="M7 10l5 5 5-5z" fill="#444746"/></svg>
<svg style="left:706.40px;top:199.00px" width="14" height="14" viewBox="0 0 24 24" ><path d="M6 7h2.5L5 3.500 1.500 7H4v10H1.500L5 20.500 8.500 17H6V7zm4-2v2h12V5H10zm0 14h12v-2H10v2zm0-6h12v-2H10v2z" fill="#444746"/></svg>
<svg style="left:730.10px;top:199.00px" width="14" height="14" viewBox="0 0 24 24" ><path d="M22 7h-9v2h9V7zm0 8h-9v2h9v-2zM5.540 11L2 7.460l1.410-1.410 2.120 2.120 4.240-4.240 1.410 1.410L5.540 11zm0 8L2 15.460l1.410-1.410 2.120 2.120 4.240-4.240 1.410 1.410L5.540 19z" fill="#444746"/></svg>
<svg style="left:746.20px;top:199.20px" width="13" height="13" viewBox="0 0 24 24" ><path d="M7 10l5 5 5-5z" fill="#444746"/></svg>
<svg style="left:763.00px;top:199.00px" width="14" height="14" viewBox="0 0 24 24" ><path d="M4 10.5c-.83 0-1.5.67-1.5 1.5s.67 1.5 1.5 1.5 1.5-.67 1.5-1.5-.67-1.5-1.5-1.5zm0-6c-.83 0-1.5.67-1.5 1.5S3.17 7.5 4 7.5 5.500 6.830 5.500 6 4.830 4.500 4 4.500zm0 12c-.83 0-1.5.68-1.5 1.5s.68 1.5 1.5 1.500 1.500-.68 1.500-1.500-.67-1.500-1.500-1.500zM7 19h14v-2H7v2zm0-6h14v-2H7v2zm0-8v2h14V5H7z" fill="#444746"/></svg>
<svg style="left:778.80px;top:199.20px" width="13" height="13" viewBox="0 0 24 24" ><path d="M7 10l5 5 5-5z" fill="#444746"/></svg>
<svg style="left:795.00px;top:198.80px" width="14" height="14" viewBox="0 0 24 24" ><path d="M2 17h2v.5H3v1h1v.5H2v1h3v-4H2v1zm1-9h1V4H2v1h1v3zm-1 3h1.800L2 13.100v.9h3v-1H3.200L5 10.900V10H2v1zm5-6v2h14V5H7zm0 14h14v-2H7v2zm0-6h14v-2H7v2z" fill="#444746"/></svg>
<svg style="left:810.60px;top:199.20px" width="13" height="13" viewBox="0 0 24 24" ><path d="M7 10l5 5 5-5z" fill="#444746"/></svg>
<svg style="left:827.20px;top:199.00px" width="14" height="14" viewBox="0 0 24 24" ><path d="M12 8c1.1 0 2-.9 2-2s-.9-2-2-2-2 .9-2 2 .9 2 2 2zm0 2c-1.1 0-2 .9-2 2s.9 2 2 2 2-.9 2-2-.9-2-2-2zm0 6c-1.1 0-2 .9-2 2s.9 2 2 2 2-.9 2-2-.9-2-2-2z" fill="#444746"/></svg>
<svg style="left:883.80px;top:200.00px" width="11" height="11" viewBox="0 0 11 11" fill="none" stroke="#444746" stroke-width="1.2" stroke-linejoin="round"><path d="M0.900 10.100L1.500 7.500 7.600 1.400Q8.400 0.600 9.200 1.400L9.600 1.800Q10.400 2.600 9.600 3.400L3.500 9.500Z"/><path d="M6.600 2.500L8.500 4.400" stroke-width="1"/></svg>
<svg style="left:898.10px;top:198.60px" width="13" height="13" viewBox="0 0 24 24" ><path d="M7 10l5 5 5-5z" fill="#444746"/></svg>
<div class="sep" style="left:927px;top:198px;height:15px"></div>
<svg style="left:933.90px;top:199.00px" width="14" height="14" viewBox="0 0 24 24" ><path d="M12 8l-6 6 1.410 1.410L12 10.830l4.590 4.580L18 14z" fill="#444746"/></svg>
<div class="a" style="left:15px;top:241px;width:946px;height:1px;background:#d3d5d9"></div>
<div class="a" style="left:15px;top:241px;width:1px;height:460px;background:#dfe1e5"></div>
<svg style="left:0;top:226px" width="1000" height="16" viewBox="0 226 1000 16"><text x="176.50" y="235.300" font-family="Liberation Sans,sans-serif" font-size="8.300" fill="#4a4d51" text-anchor="middle">1</text><rect x="184.85" y="238.4" width="0.800" height="2.6" fill="#a3a6aa"/><rect x="193.60" y="238.4" width="0.800" height="2.6" fill="#a3a6aa"/><rect x="202.35" y="238.4" width="0.800" height="2.6" fill="#a3a6aa"/><rect x="211.10" y="236.5" width="0.800" height="4.5" fill="#a3a6aa"/><rect x="219.85" y="238.4" width="0.800" height="2.6" fill="#a3a6aa"/><rect x="228.60" y="238.4" width="0.800" height="2.6" fill="#a3a6aa"/><rect x="237.35" y="238.4" width="0.800" height="2.6" fill="#a3a6aa"/><rect x="254.85" y="238.4" width="0.800" height="2.6" fill="#a3a6aa"/><rect x="263.60" y="238.4" width="0.800" height="2.6" fill="#a3a6aa"/><rect x="272.35" y="238.4" width="0.800" height="2.6" fill="#a3a6aa"/><rect x="281.10" y="236.5" width="0.800" height="4.5" fill="#a3a6aa"/><rect x="289.85" y="238.4" width="0.800" height="2.6" fill="#a3a6aa"/><rect x="298.60" y="238.4" width="0.800" height="2.6" fill="#a3a6aa"/><rect x="307.35" y="238.4" width="0.800" height="2.6" fill="#a3a6aa"/><text x="316.50" y="235.300" font-family="Liberation Sans,sans-serif" font-size="8.300" fill="#4a4d51" text-anchor="middle">1</text><rect x="324.85" y="238.4" width="0.800" height="2.6" fill="#a3a6aa"/><rect x="333.60" y="238.4" width="0.800" height="2.6" fill="#a3a6aa"/><rect x="342.35" y="238.4" width="0.800" height="2.6" fill="#a3a6aa"/><rect x="351.10" y="236.5" width="0.800" height="4.5" fill="#a3a6aa"/><rect x="359.85" y="238.4" width="0.800" height="2.6" fill="#a3a6aa"/><rect x="368.60" y="238.4" width="0.800" height="2.6" fill="#a3a6aa"/><rect x="377.35" y="238.4" width="0.800" height="2.6" fill="#a3a6aa"/><text x="386.50" y="235.300" font-family="Liberation Sans,sans-serif" font-size="8.300" fill="#4a4d51" text-anchor="middle">2</text><rect x="394.85" y="238.4" width="0.800" height="2.6" fill="#a3a6aa"/><rect x="403.60" y="238.4" width="0.800" height="2.6" fill="#a3a6aa"/><rect x="412.35" y="238.4" width="0.800" height="2.6" fill="#a3a6aa"/><rect x="421.10" y="236.5" width="0.800" height="4.5" fill="#a3a6aa"/><rect x="429.85" y="238.4" width="0.800" height="2.6" fill="#a3a6aa"/><rect x="438.60" y="238.4" width="0.800" height="2.6" fill="#a3a6aa"/><rect x="447.35" y="238.4" width="0.800" height="2.6" fill="#a3a6aa"/><text x="456.50" y="235.300" font-family="Liberation Sans,sans-serif" font-size="8.300" fill="#4a4d51" text-anchor="middle">3</text><rect x="464.85" y="238.4" width="0.800" height="2.6" fill="#a3a6aa"/><rect x="473.60" y="238.4" width="0.800" height="2.6" fill="#a3a6aa"/><rect x="482.35" y="238.4" width="0.800" height="2.6" fill="#a3a6aa"/><rect x="491.10" y="236.5" width="0.800" height="4.5" fill="#a3a6aa"/><rect x="499.85" y="238.4" width="0.800" height="2.6" fill="#a3a6aa"/><rect x="508.60" y="238.4" width="0.800" height="2.6" fill="#a3a6aa"/><rect x="517.35" y="238.4" width="0.800" height="2.6" fill="#a3a6aa"/><text x="526.50" y="235.300" font-family="Liberation Sans,sans-serif" font-size="8.300" fill="#4a4d51" text-anchor="middle">4</text><rect x="534.85" y="238.4" width="0.800" height="2.6" fill="#a3a6aa"/><rect x="543.60" y="238.4" width="0.800" height="2.6" fill="#a3a6aa"/><rect x="552.35" y="238.4" width="0.800" height="2.6" fill="#a3a6aa"/><rect x="561.10" y="236.5" width="0.800" height="4.5" fill="#a3a6aa"/><rect x="569.85" y="238.4" width="0.800" height="2.6" fill="#a3a6aa"/><rect x="578.60" y="238.4" width="0.800" height="2.6" fill="#a3a6aa"/><rect x="587.35" y="238.4" width="0.800" height="2.6" fill="#a3a6aa"/><text x="596.50" y="235.300" font-family="Liberation Sans,sans-serif" font-size="8.300" fill="#4a4d51" text-anchor="middle">5</text><rect x="604.85" y="238.4" width="0.800" height="2.6" fill="#a3a6aa"/><rect x="613.60" y="238.4" width="0.800" height="2.6" fill="#a3a6aa"/><rect x="622.35" y="238.4" width="0.800" height="2.6" fill="#a3a6aa"/><rect x="631.10" y="236.5" width="0.800" height="4.5" fill="#a3a6aa"/><rect x="639.85" y="238.4" width="0.800" height="2.6" fill="#a3a6aa"/><rect x="648.60" y="238.4" width="0.800" height="2.6" fill="#a3a6aa"/><rect x="657.35" y="238.4" width="0.800" height="2.6" fill="#a3a6aa"/><text x="666.50" y="235.300" font-family="Liberation Sans,sans-serif" font-size="8.300" fill="#4a4d51" text-anchor="middle">6</text><rect x="674.85" y="238.4" width="0.800" height="2.6" fill="#a3a6aa"/><rect x="683.60" y="238.4" width="0.800" height="2.6" fill="#a3a6aa"/><rect x="692.35" y="238.4" width="0.800" height="2.6" fill="#a3a6aa"/><rect x="701.10" y="236.5" width="0.800" height="4.5" fill="#a3a6aa"/><rect x="709.85" y="238.4" width="0.800" height="2.6" fill="#a3a6aa"/><rect x="718.60" y="238.4" width="0.800" height="2.6" fill="#a3a6aa"/><rect x="727.35" y="238.4" width="0.800" height="2.6" fill="#a3a6aa"/><text x="736.50" y="235.300" font-family="Liberation Sans,sans-serif" font-size="8.300" fill="#4a4d51" text-anchor="middle">7</text><rect x="744.85" y="238.4" width="0.800" height="2.6" fill="#a3a6aa"/><rect x="753.60" y="238.4" width="0.800" height="2.6" fill="#a3a6aa"/><rect x="762.35" y="238.4" width="0.800" height="2.6" fill="#a3a6aa"/><rect x="771.10" y="236.5" width="0.800" height="4.5" fill="#a3a6aa"/><rect x="246.500" y="240.400" width="455.500" height="1.200" fill="#8a8d91"/><path d="M241.800 230.500H251.200V232.300H241.800ZM241.800 233.400H251.200L246.500 239.800Z" fill="#4d7fe6"/><path d="M697.600 234.400H706.400L702 240Z" fill="#4d7fe6"/></svg>
<div class="a" style="left:28px;top:257px;width:26px;height:26px;border-radius:50%;background:#f0f2f6"></div>
<svg style="left:35.25px;top:265.80px" width="11.5" height="8.4" viewBox="0 0 11.5 8.4"><path d="M0 1H1.600M2.900 1H11.500M0 4.200H1.600M2.900 4.200H11.500M0 7.400H1.600M2.900 7.400H11.500" stroke="#4a4d51" stroke-width="1.300"/></svg>
<div class="a" style="left:176px;top:241px;width:597px;height:460px;background:#fff;border:1px solid #d5d7da"></div>
<svg style="left:238.800px;top:282.600px" width="6.600" height="12.800" viewBox="0 0 6.6 12.8"><path d="M0 0H6.600V12.800L3.300 10 0 12.800Z" fill="#5b8be9"/></svg>
<div class="doc" style="top:254.6px"><b style="color:#77182a;-webkit-text-stroke-color:#77182a;position:absolute;right:-455px">5145.511</b></div>
<div class="doc" style="top:282.6px"><b>Students</b></div>
<div class="doc" style="top:317.6px"><b>Sexual Abuse Prevention and Education Program</b></div>
<div class="doc" style="top:352.6px"><b>Definitions</b></div>
<div class="doc" style="top:380.1px"><b>Sexual violence</b> is a multi-layered oppression that occurs at the societal and individual level and</div>
<div class="doc" style="top:397.6px">is connected to and influenced by other forms of oppression, in particular, sexism, racism and</div>
<div class="doc" style="top:415.1px">heterosexism. On the societal level, it is the preponderance of attitudes, actions, social norms that</div>
<div class="doc" style="top:432.6px">perpetuate and sustain environments and behaviors that promote a cultural tolerance, acceptance,</div>
<div class="doc" style="top:450.1px">and denial of sexual assault and abuse.&nbsp; On an individual level, sexual violence is a wide range of</div>
<div class="doc" style="top:467.6px">sexual acts and behaviors that are unwanted, coerced, committed without consent, or forced</div>
<div class="doc" style="top:485.1px">either by physical means or through threats.</div>
<div class="doc" style="top:512.6px"><b>Sexual abuse</b> refers to coerced or forced sexual contact or activity that may be ongoing or occurs</div>
<div class="doc" style="top:530.1px">over time, often within a trusting relationship. Most victims know their perpetrators. Perpetrators</div>
<div class="doc" style="top:547.6px">are usually older than their victims and may trick or force them into gradually doing the sexual</div>
<div class="doc" style="top:565.1px">behavior. The sexual behavior may not be violent and may even be pleasurable to the child, who</div>
<div class="doc" style="top:582.6px">doesn’t necessarily know it is wrong. Perpetrators of ongoing sexual abuse control the</div>
<div class="doc" style="top:600.1px">child/youth through secrecy, shame, or threats. Children cannot consent to sexual contact with</div>
<div class="doc" style="top:617.6px">adults or older youth, and sexual contact is considered abuse, regardless of whether it includes</div>
<div class="doc" style="top:635.1px">touching or not.</div>
<div class="doc" style="top:662.6px"><b>Sexual assault</b> usually refers to forced or unwanted sexual contact or activity that occurs as a</div>
<svg style="left:385.500px;top:395px" width="5" height="13" viewBox="0 0 5 13"><path d="M0.500 0.600H4.500M2.500 0.600V12.400M0.500 12.400H4.500" stroke="#2a2a2a" stroke-width="1" fill="none"/></svg>
<div class="a" style="left:964.800px;top:289.500px;width:5px;height:16px;border-radius:2.500px;background:#dfe0e3"></div>
<svg style="left:986.55px;top:199.85px" width="13.5" height="13.5" viewBox="0 0 13.5 13.5"><rect width="13.500" height="13.500" rx="1.800" fill="#4a7de6"/><rect x="10.300" y="3.200" width="3.200" height="7.100" fill="#f0c13a"/><rect x="0" y="10.300" width="10.300" height="3.200" fill="#48a35c"/><path d="M10.300 10.300H13.500L10.300 13.500Z" fill="#d9503f"/><rect x="3.200" y="3.200" width="7.100" height="7.100" fill="#f4f7fd"/><text x="6.750" y="9.300" font-family="Liberation Sans,sans-serif" font-size="5.500" font-weight="bold" fill="#6f95e8" text-anchor="middle">31</text></svg>
<svg style="left:986.55px;top:244.80px" width="13.5" height="16" viewBox="0 0 13.5 16"><path d="M1.500 0H9.500L13.500 4V14.500Q13.500 16 12 16H1.500Q0 16 0 14.500V1.500Q0 0 1.500 0Z" fill="#f2c230"/><circle cx="6.750" cy="7.300" r="2.600" fill="#fff8e0"/><rect x="5.400" y="10.500" width="2.700" height="1.500" fill="#fff8e0"/></svg>
<svg style="left:986.55px;top:293.05px" width="13.5" height="13.5" viewBox="0 0 13.5 13.5"><circle cx="6.750" cy="7" r="5.300" fill="none" stroke="#3a73e0" stroke-width="2"/><path d="M4.200 7L6.200 9 10 5" fill="none" stroke="#3a73e0" stroke-width="1.700"/><circle cx="11.300" cy="2.500" r="1.700" fill="#2a5cc8"/></svg>
<svg style="left:988.40px;top:339.25px" width="9.8" height="13.5" viewBox="0 0 11 13.5"><circle cx="5.500" cy="3" r="2.700" fill="#2557c7"/><path d="M0 13.500V10.500Q0 6.800 5.500 6.800Q11 6.800 11 10.500V13.500Z" fill="#2f66d8"/></svg>
<svg style="left:988.55px;top:384.75px" width="9.5" height="14.5" viewBox="0 0 9.5 14.5"><path d="M4.750 14.500C4.750 11 0 8.500 0 4.750A4.750 4.750 0 0 1 4.750 0Z" fill="#d9503f"/><path d="M4.750 0A4.750 4.750 0 0 1 9.500 4.750C9.500 8.500 4.750 11 4.750 14.500Z" fill="#3f7de6"/><path d="M0.600 7.200L4.750 14.500 8.900 7.200 4.750 4.500Z" fill="#44a35a"/><path d="M0.300 6.300L4.750 2 7.500 4.750 2 9.500Z" fill="#f0c13a" opacity=".9"/><circle cx="4.750" cy="4.750" r="1.800" fill="#fff"/></svg>
<div class="a" style="left:985px;top:428.500px;width:16px;height:1px;background:#eceef2"></div>
<svg style="left:986.55px;top:458.45px" width="13.5" height="13.5" viewBox="0 0 24 24" ><path d="M19 13h-6v6h-2v-6H5v-2h6V5h2v6h6v2z" fill="#2f3033"/></svg>
<svg style="left:987.60px;top:650.20px" width="12" height="12" viewBox="0 0 24 24" ><path d="M10 6L8.590 7.410 13.170 12l-4.580 4.590L10 18l6-6z" fill="#5f6368"/></svg>
</div>
</div>
<div id="zoom">
<div class="a" style="left:1022px;top:111px;width:130px;height:84px;border-radius:4px;background:#63e09c"></div>
<svg class="vt" style="left:1024px;top:113px" width="126" height="80" viewBox="0 0 126 80"><defs><filter id="f1" x="-20%" y="-20%" width="140%" height="140%"><feGaussianBlur stdDeviation="1.4"/></filter><filter id="g1" x="-20%" y="-20%" width="140%" height="140%"><feGaussianBlur stdDeviation="0.9"/></filter><clipPath id="c1"><rect x="0" y="0" width="126" height="80"/></clipPath></defs><g clip-path="url(#c1)"><rect width="126" height="80" fill="#9a7a62"/><g filter="url(#f1)"><rect x="0" y="0" width="126" height="80" fill="#9a7a62" /><rect x="0" y="0" width="126" height="13" fill="#8d7058" /><rect x="14" y="12" width="10" height="68" fill="#a08068" /><rect x="28" y="14" width="14" height="66" fill="#a58670" /><rect x="2" y="30" width="8" height="40" fill="#8b6a54" /><ellipse cx="43" cy="31" rx="3.5" ry="8" fill="#8e5046" /><rect x="98" y="0" width="20" height="80" fill="#8b6a52" /><rect x="104" y="0" width="6" height="80" fill="#94745a" /><rect x="116" y="0" width="10" height="80" fill="#4e2a1a" /><path d="M50 80C46 60 46 30 54 18C62 8 90 8 96 22C100 40 98 66 92 80Z" fill="#b9a097" /><ellipse cx="54" cy="44" rx="4" ry="10" fill="#c7afa6" /><ellipse cx="62" cy="62" rx="9" ry="16" fill="#c4a79f" /><path d="M47 36C45 16 52 4 66 4L74 20C62 18 54 24 52 38Z" fill="#9c9894" /><path d="M60 20C70 10 92 12 98 26L100 40C92 28 76 22 60 26Z" fill="#8c8688" /><path d="M64 14C64 2 96 0 98 14C98 20 92 22 84 18C78 14 70 18 64 14Z" fill="#30262f" /><path d="M66 6C72 0 92 0 96 6C90 4 74 4 66 6Z" fill="#5c4a62" /><path d="M84 34C96 30 100 44 98 60C96 70 90 72 86 70C90 60 90 46 84 34Z" fill="#8f8790" /><ellipse cx="70" cy="73" rx="7" ry="2.2" fill="#96585c" /><path d="M80 80L90 64L112 80Z" fill="#101a18" /></g><g filter="url(#g1)"><path d="M54 35Q76 31 98 37L98 40Q76 35 54 38Z" fill="#56565a" /><rect x="56" y="37" width="16" height="10" fill="none" stroke="#5e5c60" stroke-width="1.500" rx="2.500"/><rect x="77" y="38" width="17" height="10" fill="none" stroke="#5e5c60" stroke-width="1.500" rx="2.500"/><ellipse cx="97" cy="43" rx="2" ry="2" fill="#1a1418" /><path d="M90 65L108 80H104L89 67Z" fill="#dcdcdc" /></g></g></svg>
<svg class="vt" style="left:1152px;top:112px" width="128" height="82" viewBox="0 0 128 82"><defs><filter id="f2" x="-20%" y="-20%" width="140%" height="140%"><feGaussianBlur stdDeviation="1.4"/></filter><filter id="g2" x="-20%" y="-20%" width="140%" height="140%"><feGaussianBlur stdDeviation="0.8"/></filter><clipPath id="c2"><rect x="0" y="0" width="128" height="82"/></clipPath></defs><g clip-path="url(#c2)"><rect width="128" height="82" fill="#b4b2b4"/><g filter="url(#f2)"><rect x="0" y="0" width="128" height="82" fill="#b4b2b4" /><path d="M12 0H128V32H36Z" fill="#c3c1c7" /><path d="M34 0H128V7H40Z" fill="#adabb1" /><path d="M0 0H12L36 33V66H0Z" fill="#d6c6b2" /><ellipse cx="13" cy="30" rx="8" ry="20" fill="#e4d7c4" /><rect x="36" y="33" width="14" height="33" fill="#8b8789" /><rect x="86" y="32" width="42" height="24" fill="#7a89a0" /><rect x="86" y="54" width="42" height="12" fill="#8d8d93" /><ellipse cx="96" cy="24" rx="8.5" ry="4.5" fill="#f8fafe" /><rect x="0" y="66" width="128" height="16" fill="#77736f" /><rect x="100" y="56" width="16" height="10" fill="#d0ccc0" /><path d="M38 82C40 56 44 14 66 9C86 12 90 40 98 62L102 82Z" fill="#33262a" /><ellipse cx="65" cy="34" rx="11" ry="18" fill="#b99b9d" /><ellipse cx="62" cy="33" rx="4" ry="7" fill="#ccadad" /><ellipse cx="65" cy="28" rx="9" ry="2" fill="#8e7274" /><ellipse cx="66" cy="44" rx="5" ry="1.5" fill="#8a6468" /><path d="M58 50H72L74 68H56Z" fill="#8a7070" /><path d="M44 82L50 70H104L110 82Z" fill="#4a4644" /><rect x="108" y="64" width="20" height="18" fill="#1a1a1c" /><rect x="110" y="70" width="6" height="8" fill="#b8b8b8" /></g><g filter="url(#g2)"></g></g></svg>
<svg class="vt" style="left:1024px;top:196px" width="127" height="80" viewBox="0 0 127 80"><defs><filter id="f3" x="-20%" y="-20%" width="140%" height="140%"><feGaussianBlur stdDeviation="1.4"/></filter><filter id="g3" x="-20%" y="-20%" width="140%" height="140%"><feGaussianBlur stdDeviation="0.9"/></filter><clipPath id="c3"><rect x="0" y="0" width="127" height="80"/></clipPath></defs><g clip-path="url(#c3)"><rect width="127" height="80" fill="#090505"/><g filter="url(#f3)"><rect x="0" y="0" width="128" height="80" fill="#090505" /><rect x="0" y="1" width="92" height="6" fill="#4a3c2c" /><rect x="20" y="22" width="24" height="41" fill="#6b5946" /><rect x="26" y="28" width="14" height="29" fill="#1c140e" /><path d="M42 62C36 40 40 12 62 10C80 12 84 36 82 58L74 62Z" fill="#c4a07a" /><path d="M42 62C38 50 40 36 46 30L50 56Z" fill="#b08a62" /><ellipse cx="62" cy="42" rx="14" ry="19" fill="#c9998b" /><ellipse cx="70" cy="54" rx="10" ry="9" fill="#d3a18b" /><ellipse cx="56" cy="48" rx="5" ry="3" fill="#a87868" /><path d="M38 80L44 64H92L98 80Z" fill="#2a2624" /></g><g filter="url(#g3)"><rect x="47" y="32" width="13.5" height="9.5" fill="#b78e84" stroke="#471c22" stroke-width="2.200" rx="2"/><rect x="63" y="32" width="13.5" height="9.5" fill="#b78e84" stroke="#471c22" stroke-width="2.200" rx="2"/></g></g></svg>
<svg class="vt" style="left:1152px;top:194px" width="128" height="82" viewBox="0 0 128 82"><defs><filter id="f4" x="-20%" y="-20%" width="140%" height="140%"><feGaussianBlur stdDeviation="1.4"/></filter><filter id="g4" x="-20%" y="-20%" width="140%" height="140%"><feGaussianBlur stdDeviation="0.9"/></filter><clipPath id="c4"><rect x="0" y="0" width="128" height="82"/></clipPath></defs><g clip-path="url(#c4)"><rect width="128" height="82" fill="#66645c"/><g filter="url(#f4)"><rect x="0" y="0" width="128" height="82" fill="#66645c" /><path d="M0 0H20L48 40V82H0Z" fill="#757c85" /><path d="M0 0H18L30 18L8 44H0Z" fill="#9a9ea3" /><ellipse cx="3" cy="38" rx="5" ry="8" fill="#f4f8fc" /><ellipse cx="9" cy="9" rx="2.5" ry="2.5" fill="#3c3c3e" /><path d="M0 56H46V82H0Z" fill="#666d78" /><path d="M20 0H56L50 40Z" fill="#484848" /><rect x="80" y="0" width="40" height="30" fill="#6a6048" /><rect x="100" y="28" width="22" height="34" fill="#3d3b32" /><rect x="96" y="60" width="32" height="22" fill="#5c5a4c" /><rect x="121" y="0" width="7" height="82" fill="#8a8a7c" /><path d="M44 74C46 50 50 8 72 5C92 8 98 40 108 76Z" fill="#c3bbb5" /><ellipse cx="71" cy="12" rx="15" ry="7" fill="#d6d2ce" /><ellipse cx="72" cy="42" rx="16" ry="26" fill="#c0a09c" /><ellipse cx="72" cy="22" rx="12" ry="6" fill="#ccbcb6" /><ellipse cx="74" cy="47" rx="6" ry="1.8" fill="#925c62" /><path d="M40 82L48 68Q60 62 66 66L82 66Q100 62 112 76V82Z" fill="#d7508a" /><rect x="64" y="62" width="20" height="12" fill="#c09a92" /></g><g filter="url(#g4)"><rect x="56" y="26" width="15.5" height="11.5" fill="#a98a8c" stroke="#4a2830" stroke-width="2" rx="1.500"/><rect x="74" y="26" width="15.5" height="11.5" fill="#a98a8c" stroke="#4a2830" stroke-width="2" rx="1.500"/></g></g></svg>
<svg class="vt" style="left:1024px;top:276px" width="127" height="82" viewBox="0 0 127 82"><defs><filter id="f5" x="-20%" y="-20%" width="140%" height="140%"><feGaussianBlur stdDeviation="1.4"/></filter><filter id="g5" x="-20%" y="-20%" width="140%" height="140%"><feGaussianBlur stdDeviation="0.8"/></filter><clipPath id="c5"><rect x="0" y="0" width="127" height="82"/></clipPath></defs><g clip-path="url(#c5)"><rect width="127" height="82" fill="#cdc4aa"/><g filter="url(#f5)"><rect x="0" y="0" width="128" height="82" fill="#cdc4aa" /><rect x="0" y="0" width="128" height="11" fill="#b3ab94" /><rect x="48" y="0" width="34" height="9" fill="#8b8879" /><rect x="72" y="0" width="6" height="11" fill="#d8d4c8" /><rect x="0" y="11" width="128" height="20" fill="#d6cfb8" /><rect x="16" y="30" width="30" height="28" fill="#e0d9c6" /><rect x="28" y="40" width="9" height="16" fill="#4d4c3a" /><rect x="80" y="24" width="14" height="36" fill="#2b2e29" /><rect x="104" y="30" width="24" height="14" fill="#e4ddcc" /><rect x="114" y="42" width="13" height="40" fill="#2a2836" /><rect x="0" y="52" width="42" height="20" fill="#a39c8e" /><rect x="0" y="70" width="30" height="12" fill="#8f8d8a" /><ellipse cx="67" cy="38" rx="12" ry="21" fill="#c49c90" /><ellipse cx="67" cy="18" rx="12" ry="8" fill="#d4d0cc" /><ellipse cx="66" cy="31" rx="9" ry="2.2" fill="#8f746c" /><ellipse cx="67" cy="42" rx="4" ry="3" fill="#c89088" /><path d="M30 82Q34 62 56 58L67 66L80 58Q108 62 116 82Z" fill="#cac8c0" /><ellipse cx="85" cy="54" rx="5" ry="5" fill="#d0cec8" /><rect x="40" y="76" width="60" height="6" fill="#bdbdc5" /></g><g filter="url(#g5)"></g></g></svg>
<svg class="vt" style="left:1152px;top:276px" width="128" height="82" viewBox="0 0 128 82"><defs><filter id="f6" x="-20%" y="-20%" width="140%" height="140%"><feGaussianBlur stdDeviation="1.4"/></filter><filter id="g6" x="-20%" y="-20%" width="140%" height="140%"><feGaussianBlur stdDeviation="0.8"/></filter><clipPath id="c6"><rect x="0" y="0" width="128" height="82"/></clipPath></defs><g clip-path="url(#c6)"><rect width="128" height="82" fill="#b0a89c"/><g filter="url(#f6)"><rect x="0" y="0" width="128" height="82" fill="#b0a89c" /><rect x="0" y="0" width="128" height="4" fill="#c0a8a4" /><rect x="16" y="6" width="100" height="16" fill="#b5aea6" /><rect x="0" y="4" width="16" height="78" fill="#a59686" /><rect x="100" y="28" width="28" height="54" fill="#e0d8c8" /><rect x="108" y="38" width="19" height="22" fill="#8b8b81" /><rect x="108" y="46" width="19" height="4" fill="#d0ccc0" /><ellipse cx="122" cy="72" rx="9" ry="12" fill="#5a7838" /><path d="M42 82C36 50 44 14 68 11C94 14 102 44 102 82Z" fill="#30241f" /><ellipse cx="70" cy="48" rx="14" ry="24" fill="#c6b2b4" /><ellipse cx="70" cy="72" rx="9" ry="10" fill="#c2aeb2" /><ellipse cx="70" cy="40" rx="12" ry="4" fill="#93b7c1" /><ellipse cx="65" cy="41" rx="4.5" ry="3" fill="#6aa6ba" /><rect x="80" y="66" width="20" height="16" fill="#4a2820" /><rect x="0" y="78" width="100" height="4" fill="#1e2836" /></g><g filter="url(#g6)"></g></g></svg>
<svg class="vt" style="left:1024px;top:358px" width="127" height="82" viewBox="0 0 127 82"><defs><filter id="f7" x="-20%" y="-20%" width="140%" height="140%"><feGaussianBlur stdDeviation="1.4"/></filter><filter id="g7" x="-20%" y="-20%" width="140%" height="140%"><feGaussianBlur stdDeviation="0.9"/></filter><clipPath id="c7"><rect x="0" y="0" width="127" height="82"/></clipPath></defs><g clip-path="url(#c7)"><rect width="127" height="82" fill="#c2c2ca"/><g filter="url(#f7)"><rect x="0" y="0" width="128" height="82" fill="#c2c2ca" /><rect x="0" y="0" width="128" height="19" fill="#a9a9a9" /><rect x="0" y="19" width="104" height="4" fill="#b4b4b8" /><rect x="0" y="23" width="104" height="38" fill="#c4c4cc" /><rect x="36" y="28" width="17" height="33" fill="#b0b0b9" /><rect x="96" y="0" width="32" height="16" fill="#b8b8bc" /><ellipse cx="105" cy="11" rx="4" ry="6" fill="#3a3c38" /><ellipse cx="98" cy="13" rx="3" ry="4" fill="#d8d0d4" /><rect x="104" y="16" width="24" height="5" fill="#c0a67e" /><rect x="108" y="21" width="20" height="61" fill="#a25c22" /><rect x="0" y="60" width="62" height="22" fill="#3a3434" /><ellipse cx="22" cy="62" rx="24" ry="5" fill="#8e8a8c" /><path d="M54 82C54 60 60 48 80 46L84 82Z" fill="#6a2a28" /><ellipse cx="95" cy="42" rx="13" ry="17" fill="#8a6050" /><path d="M78 36C76 22 84 16 94 17C104 18 108 24 108 32C100 26 88 28 82 38Z" fill="#2a2424" /><ellipse cx="108" cy="50" rx="5" ry="22" fill="#7a4a30" /><ellipse cx="96" cy="38" rx="2.5" ry="3.5" fill="#f0e8e0" /><rect x="80" y="56" width="22" height="26" fill="#cfc7ba" /><rect x="0" y="79" width="128" height="3" fill="#6a9a3a" /></g><g filter="url(#g7)"><rect x="80" y="58" width="22" height="1.6" fill="#7a7068" /><rect x="80" y="62" width="22" height="1.6" fill="#7a7068" /><rect x="80" y="66" width="22" height="1.6" fill="#7a7068" /><rect x="80" y="70" width="22" height="1.6" fill="#7a7068" /><rect x="80" y="74" width="22" height="1.6" fill="#7a7068" /><rect x="80" y="78" width="22" height="1.6" fill="#7a7068" /></g></g></svg>
<div class="zl" style="left:1024.1px;top:177px;width:57.4px;height:15px"></div><div class="t zt" style="left:1027.6px;top:179.6px;transform:scaleX(0.8064)">Kate Conetta</div>
<div class="zl" style="left:1151.8px;top:177px;width:65.5px;height:15px"></div><div class="t zt" style="left:1155.3px;top:179.6px;transform:scaleX(0.7814)">Kelly Truchsess</div>
<div class="zl" style="left:1023.7px;top:259px;width:78.3px;height:15px"></div><svg class="mic" width="9" height="11.5" viewBox="0 0 9 11.5" style="left:1026.9px;top:260.6px"><rect x="2.500" y="0.400" width="4" height="6.800" rx="2" fill="#e03a5e"/><path d="M0.900 5.200c0 4.600 7.200 4.600 7.200 0" fill="none" stroke="#e03a5e" stroke-width="1.200"/><path d="M4.500 8.600v2.500" stroke="#e03a5e" stroke-width="1.400"/><path d="M0.700 10.400L8.300 1" stroke="#c92a4c" stroke-width="1.500"/></svg><div class="t zt" style="left:1039.7px;top:261.6px;transform:scaleX(0.8201)">Kim Thompson</div>
<div class="zl" style="left:1151.7px;top:259px;width:44.3px;height:15px"></div><svg class="mic" width="9" height="11.5" viewBox="0 0 9 11.5" style="left:1154.9px;top:260.6px"><rect x="2.500" y="0.400" width="4" height="6.800" rx="2" fill="#e03a5e"/><path d="M0.900 5.200c0 4.600 7.200 4.600 7.200 0" fill="none" stroke="#e03a5e" stroke-width="1.200"/><path d="M4.500 8.600v2.500" stroke="#e03a5e" stroke-width="1.400"/><path d="M0.700 10.400L8.300 1" stroke="#c92a4c" stroke-width="1.500"/></svg><div class="t zt" style="left:1167.7px;top:261.6px;transform:scaleX(0.7783)">Sherry</div>
<div class="zl" style="left:1023.7px;top:340px;width:43.6px;height:15px"></div><svg class="mic" width="9" height="11.5" viewBox="0 0 9 11.5" style="left:1026.9px;top:341.6px"><rect x="2.500" y="0.400" width="4" height="6.800" rx="2" fill="#e03a5e"/><path d="M0.900 5.200c0 4.600 7.200 4.600 7.200 0" fill="none" stroke="#e03a5e" stroke-width="1.200"/><path d="M4.500 8.600v2.500" stroke="#e03a5e" stroke-width="1.400"/><path d="M0.700 10.400L8.300 1" stroke="#c92a4c" stroke-width="1.500"/></svg><div class="t zt" style="left:1039.7px;top:342.6px;transform:scaleX(0.7699)">Shaun</div>
<div class="zl" style="left:1151.7px;top:340px;width:74.6px;height:15px"></div><svg class="mic" width="9" height="11.5" viewBox="0 0 9 11.5" style="left:1154.9px;top:341.6px"><rect x="2.500" y="0.400" width="4" height="6.800" rx="2" fill="#e03a5e"/><path d="M0.900 5.200c0 4.600 7.200 4.600 7.200 0" fill="none" stroke="#e03a5e" stroke-width="1.200"/><path d="M4.500 8.600v2.500" stroke="#e03a5e" stroke-width="1.400"/><path d="M0.700 10.400L8.300 1" stroke="#c92a4c" stroke-width="1.500"/></svg><div class="t zt" style="left:1167.7px;top:342.6px;transform:scaleX(0.8131)">Kara Casimiro</div>
<div class="zl" style="left:1024.2px;top:422px;width:65.1px;height:15px"></div><div class="t zt" style="left:1027.7px;top:424.6px;transform:scaleX(0.8147)">Gladys Cooper</div>
<div class="zl" style="left:1151.5px;top:422px;width:67.5px;height:15px"></div><svg class="mic" width="9" height="11.5" viewBox="0 0 9 11.5" style="left:1154.7px;top:423.6px"><rect x="2.500" y="0.400" width="4" height="6.800" rx="2" fill="#e03a5e"/><path d="M0.900 5.200c0 4.600 7.200 4.600 7.200 0" fill="none" stroke="#e03a5e" stroke-width="1.200"/><path d="M4.500 8.600v2.500" stroke="#e03a5e" stroke-width="1.400"/><path d="M0.700 10.400L8.300 1" stroke="#c92a4c" stroke-width="1.500"/></svg><div class="t zt" style="left:1167.5px;top:424.6px;transform:scaleX(0.8061)">Luisa Britton</div>
<div class="zl" style="left:1023.7px;top:504px;width:39.7px;height:15px"></div><svg class="mic" width="9" height="11.5" viewBox="0 0 9 11.5" style="left:1026.9px;top:505.6px"><rect x="2.500" y="0.400" width="4" height="6.800" rx="2" fill="#e03a5e"/><path d="M0.900 5.200c0 4.600 7.200 4.600 7.200 0" fill="none" stroke="#e03a5e" stroke-width="1.200"/><path d="M4.500 8.600v2.500" stroke="#e03a5e" stroke-width="1.400"/><path d="M0.700 10.400L8.300 1" stroke="#c92a4c" stroke-width="1.500"/></svg><div class="t zt" style="left:1039.7px;top:506.6px;transform:scaleX(0.7777)">Clara</div>
<div class="zl" style="left:1152.3px;top:504px;width:79.7px;height:15px"></div><div class="t zt" style="left:1155.8px;top:506.6px;transform:scaleX(0.7805)">Juanita Bush Harris</div>
<div class="zl" style="left:1087.6px;top:586px;width:78.6px;height:15px"></div><svg class="mic" width="9" height="11.5" viewBox="0 0 9 11.5" style="left:1090.8px;top:587.6px"><rect x="2.500" y="0.400" width="4" height="6.800" rx="2" fill="#e03a5e"/><path d="M0.900 5.200c0 4.600 7.200 4.600 7.200 0" fill="none" stroke="#e03a5e" stroke-width="1.200"/><path d="M4.500 8.600v2.500" stroke="#e03a5e" stroke-width="1.400"/><path d="M0.700 10.400L8.300 1" stroke="#c92a4c" stroke-width="1.500"/></svg><div class="t zt" style="left:1103.6px;top:588.6px;transform:scaleX(0.8287)">shaunratchford</div>
<div class="t zn" style="left:1185.5px;top:392px;transform:scaleX(0.8108)">Luisa Britton</div>
<div class="t zn" style="left:1075.8px;top:474px;transform:scaleX(0.7862)">Clara</div>
<div class="t zn" style="left:1172px;top:474px;transform:scaleX(0.8267)">Juanita Bush Ha...</div>
<div class="t zn" style="left:1115.5px;top:555px;transform:scaleX(0.8147)">shaunratchford</div>
</div>
</body>
</html>
